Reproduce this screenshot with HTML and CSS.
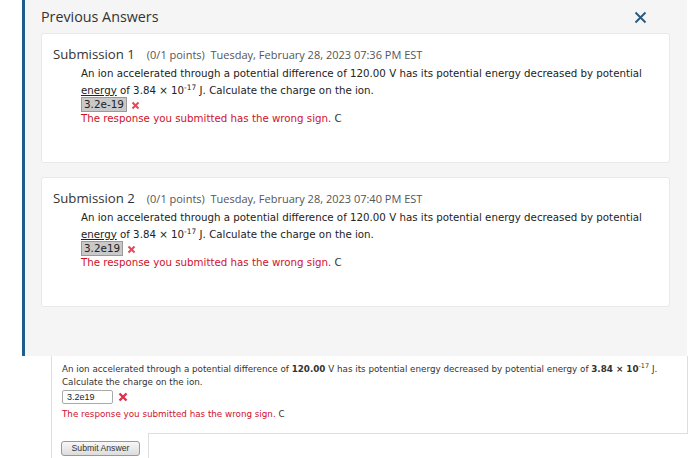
FILE: index.html
```html
<!DOCTYPE html>
<html>
<head>
<meta charset="utf-8">
<link rel="stylesheet" href="styles.css">
</head>
<body>
<div class="prev">
  <div class="prev-head">
    <h2 class="prev-title">Previous Answers</h2>
    <svg class="close" width="13" height="13" viewBox="0 0 13 13"><path d="M1.5 1.5 L11.5 11.5 M11.5 1.5 L1.5 11.5" stroke="#2c5d80" stroke-width="2" fill="none"/></svg>
  </div>
  <div class="card">
    <div class="sub-head"><span class="sub-name">Submission 1</span><span class="sub-meta">(0/1 points)&nbsp; Tuesday, February 28, 2023 07:36 PM EST</span></div>
    <div class="sub-body">
      <p class="q-text">An ion accelerated through a potential difference of 120.00 V has its potential energy decreased by potential <u>energy</u> of 3.84 × 10<sup>-17</sup> J. Calculate the charge on the ion.</p>
      <div class="ans-row"><span class="ans">3.2e-19</span><svg class="xmark" width="9" height="9" viewBox="0 0 9 9"><path d="M1.5 1.5 L7.5 7.5 M7.5 1.5 L1.5 7.5" stroke="#e8475b" stroke-width="2" fill="none"/></svg></div>
      <p class="err">The response you submitted has the wrong sign. <span class="c">C</span></p>
    </div>
  </div>
  <div class="card">
    <div class="sub-head"><span class="sub-name">Submission 2</span><span class="sub-meta">(0/1 points)&nbsp; Tuesday, February 28, 2023 07:40 PM EST</span></div>
    <div class="sub-body">
      <p class="q-text">An ion accelerated through a potential difference of 120.00 V has its potential energy decreased by potential <u>energy</u> of 3.84 × 10<sup>-17</sup> J. Calculate the charge on the ion.</p>
      <div class="ans-row"><span class="ans">3.2e19</span><svg class="xmark" width="9" height="9" viewBox="0 0 9 9"><path d="M1.5 1.5 L7.5 7.5 M7.5 1.5 L1.5 7.5" stroke="#e8475b" stroke-width="2" fill="none"/></svg></div>
      <p class="err">The response you submitted has the wrong sign. <span class="c">C</span></p>
    </div>
  </div>
</div>
<div class="question">
  <div class="q-body">
    <p class="lq-text">An ion accelerated through a potential difference of <b>120.00</b> V has its potential energy decreased by potential energy of <b>3.84 × 10</b><sup>-17</sup> J. Calculate the charge on the ion.</p>
    <div class="lans-row"><span class="linput">3.2e19</span><svg class="lxmark" width="10" height="10" viewBox="0 0 10 10"><path d="M1.5 1.5 L8.5 8.5 M8.5 1.5 L1.5 8.5" stroke="#e03048" stroke-width="2.4" fill="none"/></svg></div>
    <p class="lerr">The response you submitted has the wrong sign. <span class="c">C</span></p>
  </div>
  <div class="q-foot">
    <div class="btn-cell"><button class="submit">Submit Answer</button></div>
    <div class="foot-rest"></div>
  </div>
</div>
</body>
</html>
```
FILE: styles.css
```css
html, body {
  margin: 0;
  padding: 0;
  background: #fff;
}
body {
  width: 700px;
  height: 458px;
  overflow: hidden;
  font-family: "DejaVu Sans", Verdana, sans-serif;
  color: #333;
}
.prev {
  margin-left: 22px;
  width: 665px;
  height: 356px;
  box-sizing: border-box;
  background: #f5f5f5;
  border-left: 3px solid #1f5d8c;
  padding: 0 17px 0 16px;
}
.prev-head {
  display: flex;
  justify-content: space-between;
  align-items: center;
  height: 33px;
  padding-right: 23px;
}
.prev-title {
  margin: 0;
  font-family: "Open Sans", sans-serif;
  font-weight: 400;
  font-size: 14.3px;
  color: #333;
  line-height: 20px;
  padding-top: 1px;
}
.close {
  display: block;
  margin-top: 1px;
}
.card {
  background: #fff;
  border: 1px solid #e9e9e9;
  border-radius: 3px;
  height: 130px;
  box-sizing: border-box;
  padding: 10px 12px 0 11px;
  margin-bottom: 14px;
}
.sub-head {
  display: flex;
  align-items: baseline;
  line-height: 20px;
  font-family: "Open Sans", sans-serif;
}
.sub-name {
  font-size: 13.2px;
  color: #333;
  margin-right: 12px;
}
.sub-meta {
  font-size: 11px;
  color: #555;
}
.sub-body {
  padding-left: 28px;
  font-size: 10.25px;
}
.q-text {
  margin: 0;
  line-height: 16.5px;
  color: #222;
}
.q-text sup {
  font-size: 7.5px;
  line-height: 0;
}
.ans-row {
  display: flex;
  align-items: center;
  height: 15px;
  margin-top: -1px;
}
.ans {
  background: #c9c9c9;
  border: 1px solid #9a9a9a;
  padding: 0 2px;
  line-height: 13px;
  font-size: 10.4px;
  color: #222;
}
.xmark {
  margin-left: 4px;
  margin-top: 2px;
}
.err {
  margin: 0;
  line-height: 13px;
  color: #d0112b;
}
.c {
  color: #333;
}
.question {
  margin-left: 51px;
  width: 637px;
  box-sizing: border-box;
  border-left: 1px solid #dedede;
}
.q-body {
  height: 77px;
  box-sizing: border-box;
  border-right: 1px solid #dedede;
  padding: 7px 0 0 10px;
  font-size: 8.75px;
}
.lq-text {
  margin: 0;
  line-height: 13px;
  color: #333;
  width: 614px;
}
.lq-text sup {
  font-size: 6.5px;
  line-height: 0;
}
.lans-row {
  display: flex;
  align-items: center;
  height: 16px;
}
.linput {
  width: 51px;
  height: 14px;
  box-sizing: border-box;
  border: 1px solid #aaa;
  border-radius: 2px;
  font-family: "Liberation Sans", Arial, sans-serif;
  font-size: 9px;
  line-height: 12px;
  padding-left: 4px;
  color: #222;
}
.lxmark {
  margin-left: 5px;
}
.lerr {
  margin: 3px 0 0 0;
  line-height: 13px;
  color: #d0112b;
}
.q-foot {
  display: flex;
  height: 25px;
}
.btn-cell {
  width: 96px;
  padding: 8px 0 0 9px;
  box-sizing: border-box;
}
.foot-rest {
  flex: 1;
  border-top: 1px solid #dedede;
  border-left: 1px solid #dedede;
}
.submit {
  display: block;
  width: 79px;
  height: 15px;
  padding: 0;
  border: 1px solid #999;
  border-radius: 3px;
  background: linear-gradient(#f8f8f8, #dcdcdc);
  font-family: "Liberation Sans", Arial, sans-serif;
  font-size: 8.7px;
  color: #333;
  line-height: 13px;
}
```
